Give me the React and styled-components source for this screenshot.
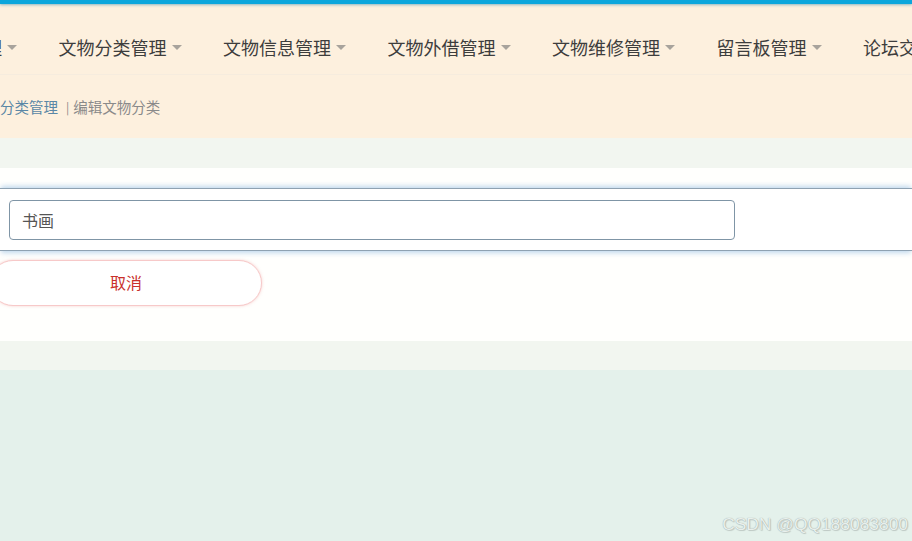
import React from 'react';
import styled, { createGlobalStyle } from 'styled-components';

const GlobalStyle = createGlobalStyle`
  html, body {
    margin: 0;
    padding: 0;
    background: #e4f1eb;
  }
  body {
    font-family: "Noto Sans CJK SC", "Noto Sans", sans-serif;
  }
  * {
    box-sizing: border-box;
  }
`

const Page = styled.div`
  position: relative;
  width: 100%;
  min-height: 541px;
  overflow: hidden;
  background: #e4f1eb;
`

const TopBar = styled.div`
  position: relative;
  z-index: 2;
  height: 4px;
  background: #0ba6dc;
  box-shadow: 0 1px 3px rgba(0, 110, 160, 0.45);
`

const Nav = styled.nav`
  height: 71px;
  padding-top: 16px;
  display: flex;
  align-items: center;
  background: #fdf0de;
  border-bottom: 1px solid #f6ecde;
`

const NavList = styled.ul`
  display: flex;
  align-items: center;
  margin: 0 0 0 -91px;
  padding: 0;
  list-style: none;
  white-space: nowrap;
`

const NavItem = styled.li`
  display: flex;
  align-items: center;
  padding: 0 20.5px 0 21px;
  font-size: 18px;
  line-height: 24px;
  color: #3d3d3d;
`

const Caret = styled.span`
  display: inline-block;
  width: 0;
  height: 0;
  margin-left: 5px;
  border-left: 5px solid transparent;
  border-right: 5px solid transparent;
  border-top: 5px solid #a8a39c;
`

const Breadcrumb = styled.div`
  height: 63px;
  display: flex;
  align-items: center;
  margin-left: -29px;
  background: #fdf0de;
  font-size: 14.5px;
  white-space: nowrap;
`

const Crumb = styled.span`
  color: ${props => props.current ? '#8a8a8a' : '#5a87a6'};
`

const Sep = styled.span`
  color: #8a8a8a;
  margin: 0 4px 0 8px;
  font-size: 12px;
`

const Content = styled.main`
  padding: 30px 0 29px;
  background: #f2f6f0;
`

const Panel = styled.section`
  height: 173px;
  padding-top: 20px;
  background: #fffffd;
`

const FormRow = styled.div`
  display: flex;
  align-items: center;
  padding: 11px 0 10px 9px;
  background: #fff;
  border-top: 1px solid #8ea2b2;
  border-bottom: 1px solid #8ea2b2;
  box-shadow: 0 -3px 5px -1px rgba(120, 170, 220, 0.45), 0 3px 5px -1px rgba(120, 170, 220, 0.45);
`

const Input = styled.input`
  width: 726px;
  height: 40px;
  padding: 0 12px;
  border: 1px solid #7f95a6;
  border-radius: 4px;
  background: #fff;
  font-family: inherit;
  font-size: 16px;
  color: #555;
  outline: none;
`

const ButtonRow = styled.div`
  display: flex;
  margin: 9px 0 0 -10px;
`

const CancelButton = styled.button`
  width: 272px;
  height: 46px;
  padding: 0 0 2px;
  border: 1.5px solid #f7c9c9;
  border-radius: 23px;
  background: #fff;
  box-shadow: 0 0 3px rgba(240, 160, 160, 0.5);
  font-family: inherit;
  font-size: 16px;
  color: #c9302c;
  cursor: pointer;
`

const Watermark = styled.div`
  position: absolute;
  right: 4px;
  bottom: 6px;
  font-family: "Liberation Sans", Arial, sans-serif;
  font-size: 17.4px;
  color: #e9f0ed;
  text-shadow: 0 0 1px #8f9995, 1px 1px 1px rgba(0, 0, 0, 0.15);
  pointer-events: none;
`

const menu = [
  '用户管理',
  '文物分类管理',
  '文物信息管理',
  '文物外借管理',
  '文物维修管理',
  '留言板管理',
  '论坛交流管理',
]

export default function App(){
  return (
    <Page>
      <GlobalStyle />
      <TopBar />
      <Nav>
        <NavList>
          {menu.map(name => (
            <NavItem key={name}>
              {name}
              <Caret />
            </NavItem>
          ))}
        </NavList>
      </Nav>
      <Breadcrumb>
        <Crumb>文物分类管理</Crumb>
        <Sep>|</Sep>
        <Crumb current>编辑文物分类</Crumb>
      </Breadcrumb>
      <Content>
        <Panel>
          <FormRow>
            <Input type='text' name='name' defaultValue='书画' />
          </FormRow>
          <ButtonRow>
            <CancelButton type='button'>取消</CancelButton>
          </ButtonRow>
        </Panel>
      </Content>
      <Watermark>CSDN @QQ188083800</Watermark>
    </Page>
  )
}
